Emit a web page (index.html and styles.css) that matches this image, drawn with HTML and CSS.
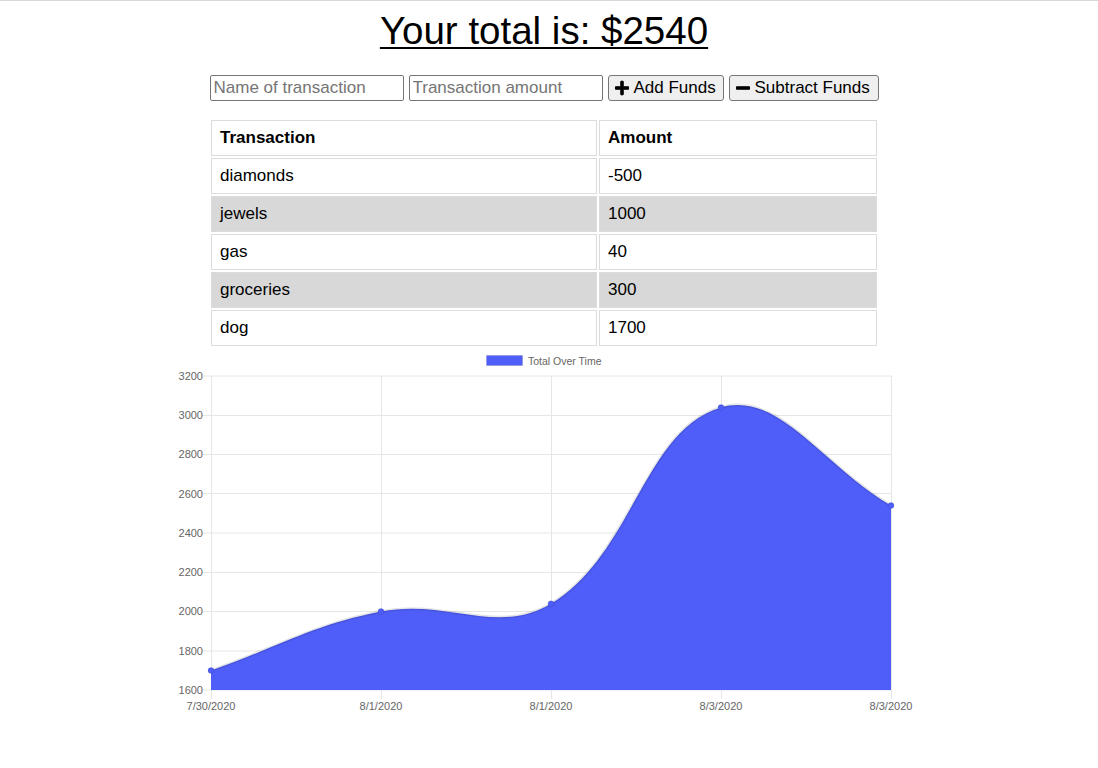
FILE: index.html
```html
<!DOCTYPE html>
<html lang="en">
<head>
<meta charset="utf-8">
<title>Budget Tracker</title>
<link rel="stylesheet" href="styles.css">
</head>
<body>
<div class="page">
  <h1 class="total">Your total is: $2540</h1>

  <form class="entry">
    <input class="field" type="text" placeholder="Name of transaction">
    <input class="field" type="text" placeholder="Transaction amount">
    <button class="btn btn-add" type="button"><svg class="ico" viewBox="0 0 448 512"><path d="M416 208H272V64c0-17.67-14.33-32-32-32h-32c-17.67 0-32 14.33-32 32v144H32c-17.67 0-32 14.33-32 32v32c0 17.670 14.33 32 32 32h144v144c0 17.67 14.33 32 32 32h32c17.67 0 32-14.33 32-32V304h144c17.67 0 32-14.33 32-32v-32c0-17.67-14.33-32-32-32z"/></svg>Add Funds</button>
    <button class="btn btn-sub" type="button"><svg class="ico" viewBox="0 0 448 512"><path d="M416 208H32c-17.67 0-32 14.33-32 32v32c0 17.67 14.33 32 32 32h384c17.670 0 32-14.33 32-32v-32c0-17.67-14.33-32-32-32z"/></svg>Subtract Funds</button>
  </form>

  <table class="tx">
    <thead>
      <tr><th class="col-name">Transaction</th><th>Amount</th></tr>
    </thead>
    <tbody>
      <tr><td>diamonds</td><td>-500</td></tr>
      <tr class="alt"><td>jewels</td><td>1000</td></tr>
      <tr><td>gas</td><td>40</td></tr>
      <tr class="alt"><td>groceries</td><td>300</td></tr>
      <tr><td>dog</td><td>1700</td></tr>
    </tbody>
  </table>

  <svg class="chart" width="760" height="372" viewBox="164 348 760 372">
    <g class="legend">
      <rect class="legend-box" x="486.5" y="355.5" width="36" height="10"/>
      <text class="legend-text" x="528" y="364.5">Total Over Time</text>
    </g>
    <g class="grid">
      <line x1="202" y1="376" x2="891" y2="376"/>
      <line x1="202" y1="415.5" x2="891" y2="415.5"/>
      <line x1="202" y1="454.5" x2="891" y2="454.5"/>
      <line x1="202" y1="493.5" x2="891" y2="493.5"/>
      <line x1="202" y1="533" x2="891" y2="533"/>
      <line x1="202" y1="572.5" x2="891" y2="572.5"/>
      <line x1="202" y1="611.5" x2="891" y2="611.5"/>
      <line x1="202" y1="651" x2="891" y2="651"/>
      <line x1="202" y1="690" x2="891" y2="690"/>
      <line x1="211.5" y1="376" x2="211.5" y2="699"/>
      <line x1="381.5" y1="376" x2="381.5" y2="699"/>
      <line x1="551.5" y1="376" x2="551.5" y2="699"/>
      <line x1="721.5" y1="376" x2="721.5" y2="699"/>
      <line x1="891.5" y1="376" x2="891.5" y2="699"/>
    </g>
    <g class="ylabels">
      <text x="203" y="380">3200</text>
      <text x="203" y="419">3000</text>
      <text x="203" y="458">2800</text>
      <text x="203" y="497.5">2600</text>
      <text x="203" y="537">2400</text>
      <text x="203" y="576">2200</text>
      <text x="203" y="615">2000</text>
      <text x="203" y="654.5">1800</text>
      <text x="203" y="694">1600</text>
    </g>
    <g class="xlabels">
      <text x="211" y="710">7/30/2020</text>
      <text x="381" y="710">8/1/2020</text>
      <text x="551" y="710">8/1/2020</text>
      <text x="721" y="710">8/3/2020</text>
      <text x="891" y="710">8/3/2020</text>
    </g>
    <path class="area" d="M211,670.4 C279,646.8 311.1,625.2 381,611.5 C447.1,598.5 497.2,636 551,603.7 C633.2,554.3 643.6,429.7 721,407.4 C779.6,390.5 823,466.3 891,505.5 L891,690 L211,690 Z"/>
    <path class="line" d="M211,670.4 C279,646.8 311.1,625.2 381,611.5 C447.1,598.5 497.2,636 551,603.7 C633.2,554.3 643.6,429.7 721,407.4 C779.6,390.5 823,466.3 891,505.5"/>
    <g class="points">
      <circle cx="211" cy="670.4" r="3"/>
      <circle cx="381" cy="611.5" r="3"/>
      <circle cx="551" cy="603.7" r="3"/>
      <circle cx="721" cy="407.4" r="3"/>
      <circle cx="891" cy="505.5" r="3"/>
    </g>
  </svg>
</div>
</body>
</html>
```

FILE: styles.css
```css
html {
  border-top: 1px solid #d6d7d9;
  background: #fff;
}

body {
  margin: 0;
  font-family: "Liberation Sans", Arial, Helvetica, sans-serif;
  color: #000;
}

.page {
  width: 1088px;
  display: flex;
  flex-direction: column;
  align-items: center;
}

.total {
  margin: 8px 0 0;
  font-size: 38.5px;
  line-height: 43px;
  font-weight: normal;
  text-decoration: underline;
  text-decoration-thickness: 2px;
  text-underline-offset: 3px;
}

.entry {
  margin-top: 23px;
  display: flex;
  gap: 5px;
  width: 669px;
}

.field {
  box-sizing: border-box;
  width: 194px;
  height: 26px;
  margin: 0;
  padding: 1px 3px;
  border: 1px solid #767676;
  border-radius: 2px;
  font-family: "Liberation Sans", Arial, sans-serif;
  font-size: 17px;
  color: #000;
  background: #fff;
}

.field::placeholder {
  color: #757575;
}

.btn {
  box-sizing: border-box;
  height: 26px;
  margin: 0;
  padding: 0 6px;
  display: flex;
  align-items: center;
  gap: 5px;
  border: 1px solid #767676;
  border-radius: 3px;
  background: #efefef;
  font-family: "Liberation Sans", Arial, sans-serif;
  font-size: 17px;
  color: #000;
  white-space: nowrap;
}

.btn-add {
  width: 116px;
}

.btn-sub {
  width: 150px;
}

.ico {
  width: 14px;
  height: 16px;
  fill: #000;
  stroke: #000;
  stroke-width: 20;
  flex: none;
}

.tx {
  margin-top: 17px;
  width: 670px;
  border-spacing: 2px;
  font-size: 17px;
}

.tx th,
.tx td {
  border: 1px solid #dcdcdc;
  padding: 8px;
  line-height: 18px;
  text-align: left;
}

.tx th {
  font-weight: bold;
}

.tx .col-name {
  width: 368px;
}

.tx .alt td {
  background: #d8d8d8;
}

.chart {
  margin-top: 0;
  display: block;
  font-family: "Liberation Sans", Arial, Helvetica, sans-serif;
}

.legend-box {
  fill: #4f5ef9;
  stroke: rgba(0, 0, 0, 0.1);
  stroke-width: 1;
}

.legend-text {
  font-size: 10.5px;
  fill: #666;
}

.grid line {
  stroke: #e6e6e6;
  stroke-width: 1;
}

.ylabels text {
  font-size: 11px;
  fill: #666;
  text-anchor: end;
}

.xlabels text {
  font-size: 11px;
  fill: #666;
  text-anchor: middle;
}

.area {
  fill: #4f5ef9;
}

.line {
  fill: none;
  stroke: rgba(0, 0, 0, 0.1);
  stroke-width: 3;
}

.points circle {
  fill: #4f5ef9;
  stroke: rgba(0, 0, 0, 0.1);
  stroke-width: 1;
}
```
